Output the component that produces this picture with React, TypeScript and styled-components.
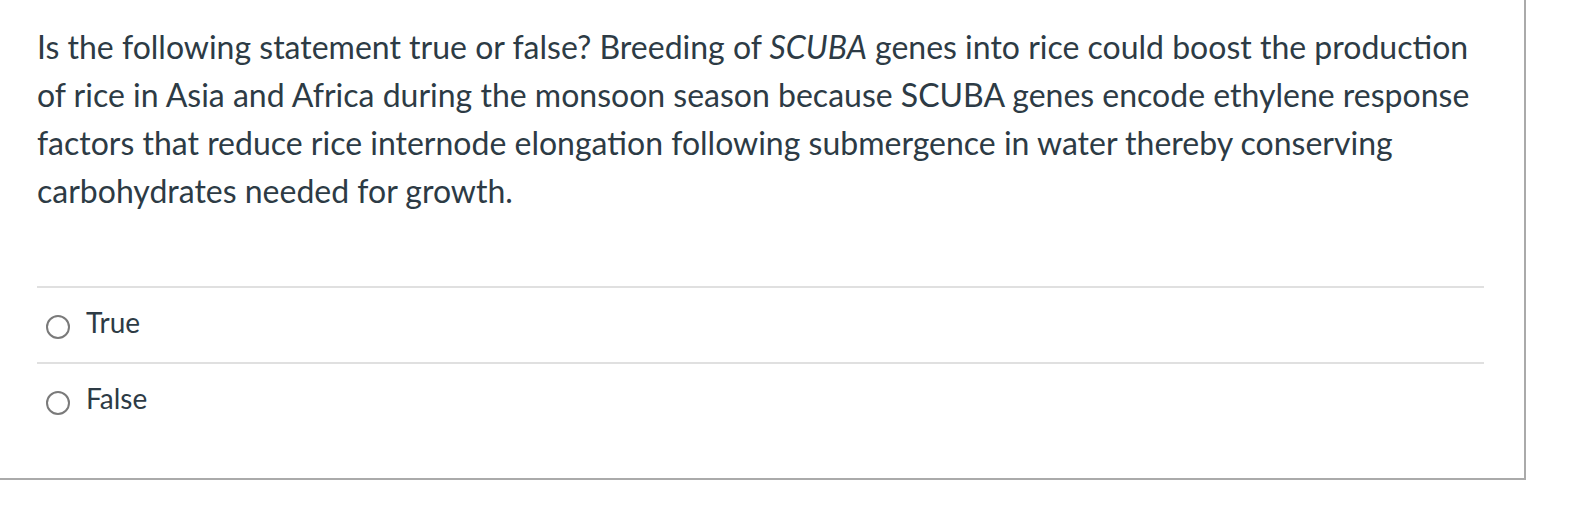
import React from "react";
import styled, { createGlobalStyle } from "styled-components";

const Global = createGlobalStyle`
  html, body { margin: 0; padding: 0; background: #ffffff; }
  body { font-family: Lato, "Open Sans", "Liberation Sans", sans-serif; }
`;

const Panel = styled.div`
  box-sizing: border-box;
  width: 1526px;
  height: 480px;
  background: #ffffff;
  border-right: 2px solid #aaaaaa;
  border-bottom: 2px solid #aaaaaa;
  padding: 23px 40px 0 37px;
  color: #2d3b45;
`;

const Question = styled.div`
  font-size: 32px;
  line-height: 48px;
  margin: 0;
`;

const AnswerList = styled.div`
  margin-top: 71px;
  display: flex;
  flex-direction: column;
`;

const AnswerRow = styled.label`
  box-sizing: border-box;
  height: 76px;
  display: flex;
  align-items: center;
  padding-left: 9px;
  border-top: 2px solid #e0e0e0;
  font-size: 28px;
  cursor: pointer;
`;

const Radio = styled.span`
  box-sizing: border-box;
  width: 24px;
  height: 24px;
  margin-top: 4px;
  margin-right: 16px;
  border-radius: 50%;
  border: 2px solid #7a7a7a;
  background: #ffffff;
  flex: none;
`;

const AnswerText = styled.span`
  line-height: 28px;
  margin-bottom: 6px;
`;

const answers = ["True", "False"];

export default function App() {
  return (
    <>
      <Global />
      <Panel>
        <Question>
          Is the following statement true or false? Breeding of <i>SCUBA</i> genes into rice could boost the
          production of rice in Asia and Africa during the monsoon season because SCUBA genes encode ethylene
          response factors that reduce rice internode elongation following submergence in water thereby
          conserving carbohydrates needed for growth.
        </Question>
        <AnswerList>
          {answers.map((a) => (
            <AnswerRow key={a}>
              <Radio />
              <AnswerText>{a}</AnswerText>
            </AnswerRow>
          ))}
        </AnswerList>
      </Panel>
    </>
  );
}
